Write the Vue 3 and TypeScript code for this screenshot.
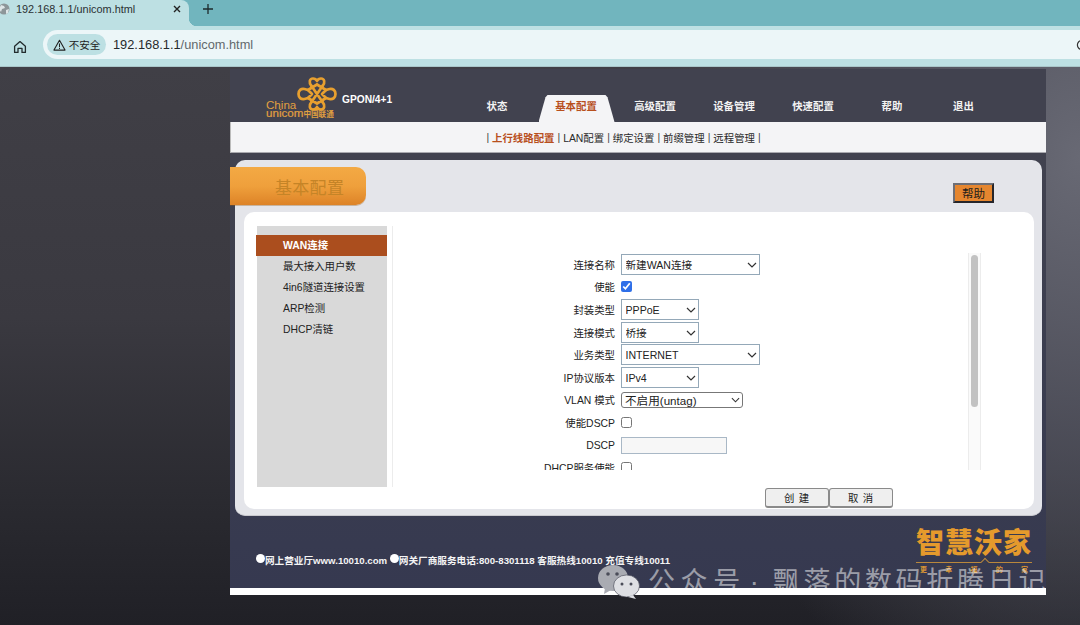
<script setup lang="ts">
const navItems = ['状态', '基本配置', '高级配置', '设备管理', '快速配置', '帮助', '退出']
const subItems = ['上行线路配置', 'LAN配置', '绑定设置', '前缀管理', '远程管理']
const sideItems = ['WAN连接', '最大接入用户数', '4in6隧道连接设置', 'ARP检测', 'DHCP清链']
</script>

<template>
  <div class="screen">
    <header class="browser">
      <div class="tabstrip">
        <div class="tab">
          <svg class="globe" viewBox="0 0 12 12" width="12" height="12"><circle cx="6" cy="6" r="5.5" fill="#8d9699" /><path d="M3 2l3 1 1 2-3 1-1 3-2-3zM8 7l3-1-1 4-2 1z" fill="#dfe6e8" /></svg>
          <span class="tab-title">192.168.1.1/unicom.html</span>
          <svg class="tab-close" viewBox="0 0 10 10" width="10" height="10"><path d="M2 2l6 6M8 2l-6 6" stroke="#222" stroke-width="1.4" fill="none" /></svg>
        </div>
        <svg class="tab-new" viewBox="0 0 12 12" width="12" height="12"><path d="M6 1v10M1 6h10" stroke="#1d2a2c" stroke-width="1.3" fill="none" /></svg>
      </div>
      <div class="toolbar">
        <svg class="home" viewBox="0 0 14 14" width="14" height="14"><path d="M1.6 6.3 7 1.6l5.4 4.7v6.1H9V8.3H5v4.1H1.6z" stroke="#222b2d" stroke-width="1.3" fill="none" stroke-linejoin="round" /></svg>
        <div class="address">
          <div class="badge">
            <svg viewBox="0 0 14 13" width="13" height="12"><path d="M7 1.4 13 12H1z" stroke="#222" stroke-width="1.2" fill="none" stroke-linejoin="round" /><path d="M7 5v3.6M7 9.6v1.1" stroke="#222" stroke-width="1.1" /></svg>
            <span>不安全</span>
          </div>
          <span class="url">192.168.1.1<em>/unicom.html</em></span>
          <svg class="edge-icon" viewBox="0 0 12 12" width="12" height="12"><circle cx="6" cy="6" r="4.6" stroke="#333" stroke-width="1.2" fill="none" /></svg>
        </div>
      </div>
    </header>

    <main class="desktop">
      <div class="router">
        <div class="head">
          <div class="logo">
            <svg class="knot" viewBox="0 0 40 34" width="40" height="34">
              <g fill="none" stroke="#e8a02f" stroke-width="2.7" stroke-linejoin="round" stroke-linecap="round">
                <path d="M14.5 9 C11.5 5.5 12.5 1.5 16 1.5 C18 1.5 19.4 2.8 20 4 C20.6 2.8 22 1.5 24 1.5 C27.5 1.5 28.5 5.5 25.5 9" />
                <path d="M14.5 25 C11.5 28.5 12.5 32.5 16 32.5 C18 32.5 19.4 31.2 20 30 C20.6 31.2 22 32.5 24 32.5 C27.5 32.5 28.5 28.5 25.5 25" />
                <path d="M11 13 L7.5 12 C4 11.2 1.5 13.5 1.5 17 C1.5 20.5 4 22.8 7.5 22 L11 21" />
                <path d="M29 13 L32.5 12 C36 11.2 38.5 13.5 38.5 17 C38.5 20.5 36 22.8 32.5 22 L29 21" />
                <path d="M14.5 9 L25.5 25M25.5 9 L14.5 25M11 13 L20 7.5 M29 13 L20 7.5 M11 21 L20 26.5 M29 21 L20 26.5 M11 13 L15 17 L11 21 M29 13 L25 17 L29 21" />
              </g>
            </svg>
            <span class="china">China</span>
            <span class="unicom">unicom<small>中国联通</small></span>
          </div>
          <span class="model">GPON/4+1</span>
          <nav class="nav">
            <a v-for="(item, i) in navItems" :key="item" class="nav-item" :class="{ on: i === 1, tail: i === 6 }"><span>{{ item }}</span></a>
          </nav>
        </div>
        <div class="subnav">
          <span class="sep">|</span>
          <template v-for="(s, i) in subItems" :key="s">
            <a :class="{ cur: i === 0 }">{{ s }}</a><span class="sep">|</span>
          </template>
        </div>
        <div class="body">
          <section class="panel">
            <div class="title-row">
              <div class="title-tab">基本配置</div>
              <button class="help">帮助</button>
            </div>
            <div class="inner">
              <div class="columns">
                <aside class="side">
                  <a v-for="(s, i) in sideItems" :key="s" class="side-item" :class="{ on: i === 0 }">{{ s }}</a>
                </aside>
                <div class="rule"></div>
                <div class="form-wrap">
                  <form class="form">
                    <div class="row">
                      <label>连接名称</label>
                      <div class="sel wide"><select><option>新建WAN连接</option></select><svg viewBox="0 0 10 6" width="10" height="6"><path d="M1 1l4 4 4-4" /></svg></div>
                    </div>
                    <div class="row">
                      <label>使能</label>
                      <input type="checkbox" class="chk" checked />
                    </div>
                    <div class="row">
                      <label>封装类型</label>
                      <div class="sel short"><select><option>PPPoE</option></select><svg viewBox="0 0 10 6" width="10" height="6"><path d="M1 1l4 4 4-4" /></svg></div>
                    </div>
                    <div class="row">
                      <label>连接模式</label>
                      <div class="sel short"><select><option>桥接</option></select><svg viewBox="0 0 10 6" width="10" height="6"><path d="M1 1l4 4 4-4" /></svg></div>
                    </div>
                    <div class="row">
                      <label>业务类型</label>
                      <div class="sel wide"><select><option>INTERNET</option></select><svg viewBox="0 0 10 6" width="10" height="6"><path d="M1 1l4 4 4-4" /></svg></div>
                    </div>
                    <div class="row">
                      <label>IP协议版本</label>
                      <div class="sel short"><select><option>IPv4</option></select><svg viewBox="0 0 10 6" width="10" height="6"><path d="M1 1l4 4 4-4" /></svg></div>
                    </div>
                    <div class="row">
                      <label>VLAN 模式</label>
                      <div class="sel vlan"><select><option>不启用(untag)</option></select><svg viewBox="0 0 10 6" width="9" height="6"><path d="M1 1l4 4 4-4" /></svg></div>
                    </div>
                    <div class="row">
                      <label>使能DSCP</label>
                      <input type="checkbox" class="chk" />
                    </div>
                    <div class="row">
                      <label>DSCP</label>
                      <input type="text" class="txt" />
                    </div>
                    <div class="row">
                      <label>DHCP服务使能</label>
                      <input type="checkbox" class="chk" />
                    </div>
                  </form>
                  <div class="scroll"><i></i></div>
                </div>
              </div>
              <div class="actions">
                <button class="act">创 建</button><button class="act">取 消</button>
              </div>
            </div>
          </section>
          <footer class="foot">
            <p class="foot-text"><i class="dot"></i>网上营业厅www.10010.com <i class="dot"></i>网关厂商服务电话:800-8301118 客服热线10010 充值专线10011</p>
            <div class="brand">
              <b>智慧沃家</b>
              <div class="brand-line"></div>
              <div class="brand-sub"><span>更</span><span>幸</span><span>福</span><span>的</span><span>家</span></div>
            </div>
          </footer>
        </div>
        <div class="strip"></div>
      </div>

      <div class="watermark">
        <svg viewBox="0 0 44 36" width="44" height="36">
          <ellipse cx="16" cy="14" rx="15" ry="13" fill="#a9abb2" />
          <path d="M8 24l-1 6 7-4z" fill="#a9abb2" />
          <ellipse cx="29.5" cy="22" rx="13" ry="11" fill="#dedfe3" stroke="#3a3c4a" stroke-width="0.6" />
          <path d="M36 31l3 4-8-2z" fill="#dedfe3" />
          <circle cx="11" cy="10" r="1.8" fill="#4a4c58" /><circle cx="20" cy="10" r="1.8" fill="#4a4c58" />
          <circle cx="25" cy="20" r="1.5" fill="#4a4c58" /><circle cx="34" cy="20" r="1.5" fill="#4a4c58" />
        </svg>
        <span class="wm-a">公众号</span><span class="wm-dot">·</span><span class="wm-b">飘落的数码折腾日记</span>
      </div>
    </main>
  </div>
</template>

<style>
html, body { margin: 0; padding: 0; }
</style>

<style scoped>
.screen {
  position: relative;
  width: 1080px;
  height: 625px;
  overflow: hidden;
  display: flex;
  flex-direction: column;
  font-family: "Liberation Sans", "Noto Sans CJK SC", sans-serif;
}
.browser { background: #bde0e3; height: 67px; flex: none; }
.tabstrip {
  height: 26px;
  background: #71b5be;
  display: flex;
  align-items: center;
}
.tab {
  width: 191px;
  height: 26px;
  margin-left: -2px;
  background: #bde0e3;
  border-top-right-radius: 8px;
  display: flex;
  align-items: center;
  position: relative;
  box-sizing: border-box;
}
.tab::after {
  content: "";
  position: absolute;
  right: -8px;
  bottom: 0;
  width: 8px;
  height: 8px;
  background: radial-gradient(circle at 100% 0, transparent 8px, #bde0e3 8.5px);
}
.globe { flex: none; margin-top: -8px; }
.tab-title { margin-left: 6px; margin-top: -9px; font-size: 10.9px; color: #2b3133; white-space: nowrap; }
.tab-close { position: absolute; left: 174px; top: 4px; }
.tab-new { margin-left: 13px; margin-top: -9px; }
.toolbar { height: 41px; display: flex; align-items: flex-start; padding-top: 4px; box-sizing: border-box; border-bottom: 1px solid #a9c6c9; }
.home { margin: 10px 0 0 13px; flex: none; }
.address {
  margin-left: 16px;
  flex: 1;
  height: 29px;
  background: #ecf6f8;
  border-radius: 15px 0 0 15px;
  display: flex;
  align-items: center;
  padding-left: 4px;
  position: relative;
}
.badge {
  width: 59px;
  height: 21px;
  border-radius: 11px;
  background: #bde0e3;
  display: flex;
  align-items: center;
  justify-content: center;
  gap: 3px;
  font-size: 10.5px;
  color: #222;
  box-sizing: border-box;
}
.url { margin-left: 7px; font-size: 12.8px; color: #26292b; }
.url em { font-style: normal; color: #62696c; }
.edge-icon { position: absolute; right: -8px; top: 9px; }

.desktop {
  position: relative;
  flex: 1;
  padding: 2px 0 0 230px;
  box-sizing: border-box;
  background:
    radial-gradient(ellipse 420px 600px at 1080px 90px, #686974 0%, rgba(84,85,97,0.8) 45%, rgba(60,60,70,0) 100%),
    linear-gradient(180deg, #403f46 0%, #3a3940 45%, #2a2a30 78%, #202026 100%);
}
.router { width: 816px; height: 526px; display: flex; flex-direction: column; }
.head {
  height: 53px;
  flex: none;
  background: #41424f;
  display: flex;
  position: relative;
}
.logo { width: 70px; height: 48px; margin: 7px 0 0 36px; position: relative; color: #e2a040; flex: none; }
.knot { position: absolute; left: 31px; top: 1px; }
.china { position: absolute; left: 0; top: 23px; font-size: 11.6px; line-height: 11px; }
.unicom { position: absolute; left: 0; top: 31px; font-size: 11.6px; line-height: 12px; white-space: nowrap; -webkit-text-stroke: 0.2px #e2a040; }
.unicom small { font-size: 7.6px; font-weight: 700; -webkit-text-stroke: 0; }
.model { position: absolute; left: 112px; top: 25px; color: #fff; font-size: 10.2px; font-weight: 700; white-space: nowrap; }
.nav { position: absolute; left: 227.5px; bottom: 0; display: flex; height: 27px; }
.nav-item {
  position: relative;
  width: 79px;
  height: 27px;
  text-align: center;
  color: #f3f3f3;
  font-size: 10.4px;
  font-weight: 700;
  line-height: 23px;
}
.nav-item span { position: relative; }
.nav-item.tail { width: 62px; margin-left: 1px; }
.nav-item.on { color: #b84f1d; }
.nav-item.on::before {
  content: "";
  position: absolute;
  left: 2px;
  right: 1px;
  top: 0;
  bottom: 0;
  background: #f4f4f6;
  clip-path: polygon(0 100%, 7px 8%, 9px 0, calc(100% - 9px) 0, calc(100% - 7px) 8%, 100% 100%);
}
.subnav {
  flex: none;
  background: #f4f4f6;
  border-left: 1px solid #bbb;
  border-bottom: 1px solid #a9a9af;
  box-sizing: border-box;
  height: 31px;
  display: flex;
  align-items: center;
  justify-content: center;
  gap: 3px;
  padding-right: 30px;
  font-size: 10.4px;
  color: #2a2a2a;
  white-space: nowrap;
}
.subnav .cur { color: #b84f1d; font-weight: 700; }
.sep { color: #444; }
.body { flex: 1; min-height: 0; background: linear-gradient(180deg, #41424f 0%, #3a3d50 60%, #363950 100%); display: flex; flex-direction: column; padding-top: 7px; }
.panel {
  margin: 0 4px 0 5px;
  height: 356px;
  flex: none;
  background: #e4e5ea;
  border-radius: 10px;
  box-sizing: border-box;
  border-bottom: 1px solid #c9c9ce;
  display: flex;
  flex-direction: column;
}
.title-row { height: 52px; flex: none; display: flex; align-items: flex-start; justify-content: space-between; position: relative; }
.title-tab {
  margin: 7px 0 0 -5px;
  width: 136px;
  height: 38px;
  box-sizing: border-box;
  padding-left: 45px;
  border-radius: 0 10px 10px 0;
  background: linear-gradient(180deg, #f3a944 0%, #efa03c 50%, #dd8327 100%);
  color: #c58427;
  font-size: 17px;
  line-height: 44px;
  letter-spacing: 0.3px;
  box-shadow: 0 1px 0 rgba(150, 90, 20, 0.35);
}
.help {
  margin: 23px 48px 0 0;
  width: 41px;
  height: 20px;
  padding: 0;
  box-sizing: border-box;
  background: #e5862f;
  border: 2px solid;
  border-color: #6e6f76 #26262b #26262b #6e6f76;
  color: #1c1c1c;
  font: 11.5px "Liberation Sans", "Noto Sans CJK SC", sans-serif;
}
.inner {
  margin: 0 8px 0 9px;
  height: 297px;
  background: #fff;
  border-radius: 10px;
  display: flex;
  flex-direction: column;
  flex: none;
  padding: 14px 0 0 13px;
  box-sizing: border-box;
  position: relative;
}
.columns { display: flex; height: 261px; flex: none; }
.side {
  width: 130px;
  flex: none;
  background: #d9d9d9;
  padding-top: 9px;
  box-sizing: border-box;
  display: flex;
  flex-direction: column;
}
.side-item {
  height: 21px;
  line-height: 21px;
  padding-left: 26px;
  font-size: 10.4px;
  color: #222;
  white-space: nowrap;
}
.side-item.on { background: #ab4e1e; color: #fff; font-weight: 700; margin-left: -1px; padding-left: 27px; }
.rule { width: 1px; background: #ececec; margin-left: 5px; flex: none; }
.form-wrap { flex: 1; display: flex; height: 244px; min-width: 0; padding-top: 27px; box-sizing: border-box; align-items: flex-start; position: relative; }
.form { width: 575px; height: 217px; overflow: hidden; flex: none; }
.row { height: 22.6px; display: flex; align-items: center; }
.row label {
  width: 222px;
  margin-right: 6px;
  text-align: right;
  font-size: 10.4px;
  color: #222;
  white-space: nowrap;
  flex: none;
}
.sel { position: relative; height: 21px; flex: none; }
.sel select {
  appearance: none;
  width: 100%;
  height: 100%;
  display: block;
  box-sizing: border-box;
  padding: 1px 0 0 3.5px;
  border: 1px solid #94a8b8;
  border-radius: 0;
  background: #fff;
  color: #222;
  font: 10.6px "Liberation Sans", "Noto Sans CJK SC", sans-serif;
  outline: none;
}
.sel svg { position: absolute; right: 3px; top: 8px; pointer-events: none; }
.sel svg path { fill: none; stroke: #333; stroke-width: 1.2; }
.wide { width: 139px; }
.short { width: 78px; }
.vlan { width: 122px; height: 16px; }
.vlan select {
  border: 1px solid #777;
  border-radius: 3px;
  font-size: 11.6px;
  padding: 1px 0 0 3px;
}
.vlan svg { top: 5px; }
.chk {
  width: 11px;
  height: 11px;
  margin: 0;
  flex: none;
  accent-color: #2f6fe8;
}
.txt {
  width: 106px;
  height: 17px;
  box-sizing: border-box;
  border: 1px solid #a9b8c6;
  background: #f7f7f7;
  padding: 0;
  flex: none;
}
.scroll {
  width: 13px;
  height: 217px;
  flex: none;
  background: #fafafa;
  border-left: 1px solid #ececec;
  border-right: 1px solid #ececec;
  box-sizing: border-box;
  padding: 2px 2px 0;
}
.scroll i { display: block; width: 7px; height: 152px; border-radius: 4px; background: #c2c2c2; }
.actions { display: flex; justify-content: flex-start; padding-left: 508px; margin-top: 1px; }
.act {
  width: 64px;
  height: 20px;
  padding: 0;
  box-sizing: border-box;
  background: #efefef;
  border: 1px solid #8a8a8a;
  border-bottom-width: 2px;
  border-radius: 3px;
  color: #222;
  font: 10.4px "Liberation Sans", "Noto Sans CJK SC", sans-serif;
  letter-spacing: 0.8px;
}
.foot { flex: 1; position: relative; padding: 0 0 0 26px; display: flex; }
.foot-text {
  margin: 38px 0 0;
  color: #f4f4f4;
  font-size: 9.65px;
  font-weight: 700;
  line-height: 14px;
  white-space: nowrap;
}
.dot { display: inline-block; width: 9px; height: 9px; border-radius: 50%; background: #fff; vertical-align: 1px; }
.brand { position: absolute; right: 14px; top: 10px; width: 116px; color: #e59a2c; }
.brand b { display: block; font-size: 28px; line-height: 36px; letter-spacing: 1px; font-weight: 900; white-space: nowrap; }
.brand-line { height: 1px; background: #b9873c; position: relative; }
.brand-line::after {
  content: "";
  position: absolute;
  left: 66px;
  top: -3px;
  width: 5px;
  height: 5px;
  background: #373a50;
  border-left: 1px solid #b9873c;
  border-top: 1px solid #b9873c;
  transform: rotate(45deg);
}
.brand-sub { display: flex; justify-content: space-between; padding: 2px 4px 0; font-size: 7px; line-height: 9px; font-weight: 700; color: #d79436; }
.strip { height: 7px; background: #fff; flex: none; }
.watermark {
  position: absolute;
  left: 597px;
  top: 497px;
  display: flex;
  align-items: center;
  color: rgba(255, 255, 255, 0.52);
  font-size: 27px;
  white-space: nowrap;
  line-height: 36px;
}
.watermark svg { flex: none; }
.wm-a { margin-left: 7px; letter-spacing: 5.6px; }
.wm-dot { margin-left: 4px; width: 23px; }
.wm-b { letter-spacing: 3.7px; }
</style>
